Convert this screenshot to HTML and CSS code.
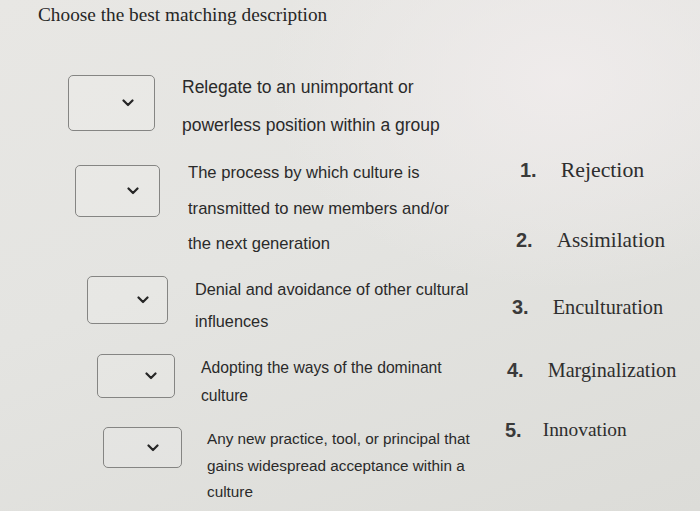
FILE: index.html
```html
<!DOCTYPE html>
<html lang="en">
<head>
<meta charset="utf-8">
<title>Choose the best matching description</title>
<link rel="stylesheet" href="styles.css">
</head>
<body>
<div class="page">
  <h1 class="title">Choose the best matching description</h1>
  <div class="main">
    <div class="rows">
      <div class="row r1">
        <div class="select"><svg class="chev" viewBox="0 0 12 8" width="12" height="8"><polyline points="1.5,1.5 6,6 10.5,1.5"/></svg></div>
        <div class="desc">Relegate to an unimportant or<br>powerless position within a group</div>
      </div>
      <div class="row r2">
        <div class="select"><svg class="chev" viewBox="0 0 12 8" width="12" height="8"><polyline points="1.5,1.5 6,6 10.5,1.5"/></svg></div>
        <div class="desc">The process by which culture is<br>transmitted to new members and/or<br>the next generation</div>
      </div>
      <div class="row r3">
        <div class="select"><svg class="chev" viewBox="0 0 12 8" width="12" height="8"><polyline points="1.5,1.5 6,6 10.5,1.5"/></svg></div>
        <div class="desc">Denial and avoidance of other cultural<br>influences</div>
      </div>
      <div class="row r4">
        <div class="select"><svg class="chev" viewBox="0 0 12 8" width="12" height="8"><polyline points="1.5,1.5 6,6 10.5,1.5"/></svg></div>
        <div class="desc">Adopting the ways of the dominant<br>culture</div>
      </div>
      <div class="row r5">
        <div class="select"><svg class="chev" viewBox="0 0 12 8" width="12" height="8"><polyline points="1.5,1.5 6,6 10.5,1.5"/></svg></div>
        <div class="desc">Any new practice, tool, or principal that<br>gains widespread acceptance within a<br>culture</div>
      </div>
    </div>
    <ol class="options">
      <li class="opt o1"><span class="num">1.</span><span class="word">Rejection</span></li>
      <li class="opt o2"><span class="num">2.</span><span class="word">Assimilation</span></li>
      <li class="opt o3"><span class="num">3.</span><span class="word">Enculturation</span></li>
      <li class="opt o4"><span class="num">4.</span><span class="word">Marginalization</span></li>
      <li class="opt o5"><span class="num">5.</span><span class="word">Innovation</span></li>
    </ol>
  </div>
</div>
</body>
</html>
```
FILE: styles.css
```css
html, body {
  margin: 0;
  padding: 0;
}
body {
  width: 700px;
  height: 511px;
  overflow: hidden;
  background:
    radial-gradient(ellipse 420px 300px at 560px 80px, rgba(240,236,236,0.9), rgba(240,236,236,0) 70%),
    linear-gradient(160deg, #e8e7e4 0%, #e4e4e1 45%, #dcdcd8 100%);
  color: #2a2a2a;
}
.page {
  padding-top: 3px;
}
.title {
  margin: 0 0 0 38px;
  font-family: "Liberation Serif", "Times New Roman", serif;
  font-weight: 400;
  font-size: 19.3px;
  line-height: 24px;
  color: #262626;
}
.main {
  display: flex;
  margin-top: 41px;
}
.rows {
  width: 505px;
  display: flex;
  flex-direction: column;
}
.row {
  display: flex;
  align-items: flex-start;
  gap: 27px;
}
.select {
  box-sizing: border-box;
  border: 1.5px solid #858583;
  border-radius: 5px;
  background: rgba(255,255,255,0.12);
  display: flex;
  align-items: center;
  justify-content: flex-end;
  padding-right: 20px;
}
.chev polyline {
  fill: none;
  stroke: #262626;
  stroke-width: 2.2;
  stroke-linecap: round;
  stroke-linejoin: round;
}
.desc {
  font-family: "Liberation Sans", Arial, sans-serif;
  white-space: nowrap;
  color: #2a2a2a;
}
.r1 { margin-left: 68px; }
.r1 .select { width: 87px; height: 56px; margin-top: 7px; }
.r1 .desc { font-size: 17.5px; line-height: 38px; }

.r2 { margin-left: 75px; margin-top: 11px; gap: 28px; }
.r2 .select { width: 85px; height: 52px; margin-top: 10px; }
.r2 .desc { font-size: 16.6px; line-height: 35.5px; }

.r3 { margin-left: 87px; margin-top: 11.5px; }
.r3 .select { width: 81px; height: 48px; margin-top: 3px; padding-right: 18px; }
.r3 .desc { font-size: 16.3px; line-height: 32px; }

.r4 { margin-left: 97px; margin-top: 17px; gap: 26px; }
.r4 .select { width: 78px; height: 44px; padding-right: 17px; }
.r4 .desc { font-size: 15.7px; line-height: 28px; }

.r5 { margin-left: 103px; margin-top: 16px; gap: 25px; }
.r5 .select { width: 79px; height: 41px; margin-top: 1px; padding-right: 22px; }
.r5 .desc { font-size: 15.3px; line-height: 26.5px; }

.options {
  list-style: none;
  margin: 0;
  padding: 87px 0 0 0;
  display: flex;
  flex-direction: column;
}
.opt {
  display: flex;
  align-items: center;
  gap: 24px;
  height: 30px;
}
.num {
  font-family: "Liberation Sans", Arial, sans-serif;
  font-weight: 700;
  font-size: 20px;
  color: #3a3a3a;
}
.word {
  font-family: "Liberation Serif", "Times New Roman", serif;
  color: #2e2e2e;
}
.o1 { margin-left: 15px; }
.o1 .word { font-size: 21.8px; }
.o2 { margin-left: 11px; margin-top: 40px; }
.o2 .word { font-size: 21.2px; }
.o3 { margin-left: 7px; margin-top: 37px; }
.o3 .word { font-size: 20.3px; }
.o4 { margin-left: 2px; margin-top: 33px; }
.o4 .word { font-size: 20.2px; }
.o5 { margin-left: 0; margin-top: 30px; gap: 21px; }
.o5 .word { font-size: 19.4px; }
```
